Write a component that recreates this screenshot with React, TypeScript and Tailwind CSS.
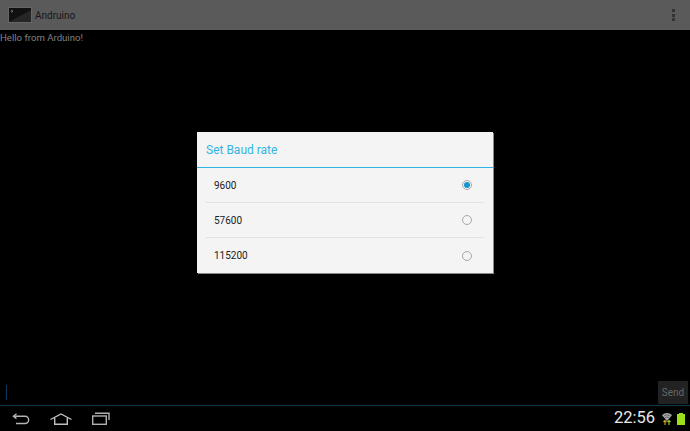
export default function App() {
  const font = { fontFamily: '"Roboto", sans-serif' };
  return (
    <div className="relative flex h-[431px] w-[690px] flex-col overflow-hidden bg-black" style={font}>
      <header className="flex h-[30px] items-center bg-[#5a5a5a] pl-[8px] pr-[15px]">
        <svg width="24" height="16" viewBox="0 0 24 16">
          <rect x="0" y="0" width="24" height="16" fill="#666" />
          <rect x="1" y="1" width="22" height="14" fill="#111" />
          <path d="M1 15 L23 3 V15Z" fill="#262626" />
          <path d="M3 3l2 1.2-2 1.2" stroke="#999" strokeWidth="0.7" fill="none" />
        </svg>
        <span className="ml-[3px] text-[10px] text-[#161616]">Andruino</span>
        <div className="ml-auto flex flex-col gap-[1.5px]">
          <i className="block h-[3px] w-[3px] bg-[#333]" />
          <i className="block h-[3px] w-[3px] bg-[#333]" />
          <i className="block h-[3px] w-[3px] bg-[#333]" />
        </div>
      </header>
      <main className="flex flex-1 flex-col bg-black">
        <p className="mt-[1px] text-[9.6px] leading-[14px] text-[#808080]">Hello from Arduino!</p>
        <div className="mt-auto flex h-[25px] items-end justify-between pb-[1px] pr-[2px]">
          <div className="mb-[4px] ml-[6px] h-[15px] w-[1px] bg-[#0d3a5c]" />
          <div className="flex h-[23px] w-[30px] items-center justify-center bg-[#222222] text-[10px] text-[#666666]">Send</div>
        </div>
      </main>
      <footer className="flex h-[26px] items-center border-t border-[#0f3a4d] bg-black">
        <div className="ml-[12px] flex items-center">
          <svg width="18" height="12" viewBox="0 0 18 12" fill="none" stroke="#b4b4b4" strokeWidth="1.4">
            <path d="M1.5 3.2H13A3.6 3.6 0 0 1 13 10.5H4" />
            <path d="M4.5 .8L1.5 3.2L4.5 5.6" />
          </svg>
          <svg className="ml-[20px]" width="22" height="12" viewBox="0 0 22 12" fill="none" stroke="#c0c0c0" strokeWidth="1.4">
            <path d="M0.5 6.5L11 1L21.5 6.5" />
            <path d="M4.7 5V11.3H17.3V5" />
          </svg>
          <svg className="ml-[20px]" width="18" height="13" viewBox="0 0 18 13" fill="none" stroke="#b0b0b0" strokeWidth="1.4">
            <rect x="0.7" y="4" width="13.6" height="8.3" />
            <path d="M3 1.2H17V8" />
          </svg>
        </div>
        <span className="ml-auto text-[16.5px] leading-none text-[#e8e8e8]">22:56</span>
        <svg className="ml-[7px]" width="10" height="12" viewBox="0 0 10 12" fill="none">
          <path d="M0 2.2C3 -.7 7 -.7 10 2.2L5 8Z" fill="#a8a8a8" />
          <path d="M1.5 3.2C3.5 1.6 6.5 1.6 8.5 3.2M3 4.8C4.2 3.9 5.8 3.9 7 4.8" stroke="#4a4a4a" strokeWidth=".7" />
          <path d="M3 7.5V12M1.5 9L3 7.5L4.5 9" stroke="#e0a020" strokeWidth="1.1" />
          <path d="M7 12V7.5M5.5 9L7 7.5L8.5 9" stroke="#8fd12a" strokeWidth="1.1" />
        </svg>
        <div className="ml-[5px] mr-[5px] flex flex-col items-center">
          <div className="h-[1px] w-[4px] bg-[#9ce01c]" />
          <div className="h-[11px] w-[8px] bg-[#9ce01c]" />
        </div>
      </footer>
      <div className="absolute left-[197px] top-[132px] w-[296px] bg-[#f4f4f4] shadow-[1px_1px_0_#888]">
        <div className="flex h-[36px] items-center border-b border-[#2fb3e6] pl-[9px] text-[12px] text-[#33b5e5]">Set Baud rate</div>
        {["9600", "57600", "115200"].map((v, i) => (
          <div key={v} className="mx-[9px] flex h-[35px] items-center justify-between border-b border-[#e2e2e2] pl-[8px] pr-[12px] text-[10px] text-[#222] last:border-b-0">
            <span>{v}</span>
            <span className="flex h-[10px] w-[10px] items-center justify-center rounded-full border border-[#a8a8a8]">
              {i === 0 && <span className="h-[6px] w-[6px] rounded-full bg-[#1694cf]" />}
            </span>
          </div>
        ))}
      </div>
    </div>
  );
}
